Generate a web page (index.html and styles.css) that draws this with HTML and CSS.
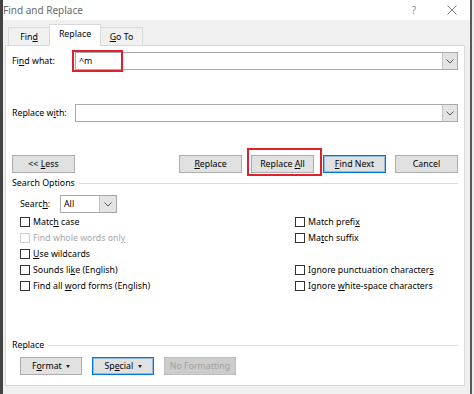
FILE: index.html
```html
<!DOCTYPE html>
<html>
<head>
  <title>Find and Replace</title>
  <link rel="stylesheet" href="styles.css">
</head>
<body>
  <div class="dialog">
    <!-- Title bar -->
    <div class="titlebar">
      <span class="title">Find and Replace</span>
      <span class="help">?</span>
      <svg class="close" width="10" height="10" viewBox="0 0 10 10">
        <path d="M0.5 0.5L9.5 9.5M9.5 0.5L0.5 9.5" stroke="#7a7a7a" stroke-width="1" fill="none"/>
      </svg>
    </div>

    <div class="dialog-body">
      <!-- Tabs -->
      <div class="tabs">
        <div class="tab tab-find">Fin<u>d</u></div>
        <div class="tab tab-replace active">Replace</div>
        <div class="tab tab-goto"><span><u>G</u>o To</span></div>
      </div>

      <!-- Replace page -->
      <div class="panel">
        <div class="field-row">
          <span class="field-label">Fi<u>n</u>d what:</span>
          <div class="combo marked">
            <span class="combo-text">^m</span>
            <span class="combo-arrow">
              <svg width="8" height="5" viewBox="0 0 8 5"><path d="M0.5 0.5L4 4L7.5 0.5" stroke="#555" fill="none"/></svg>
            </span>
          </div>
        </div>

        <div class="field-row replace-row">
          <span class="field-label">Replace w<u>i</u>th:</span>
          <div class="combo">
            <span class="combo-text"></span>
            <span class="combo-arrow">
              <svg width="8" height="5" viewBox="0 0 8 5"><path d="M0.5 0.5L4 4L7.5 0.5" stroke="#555" fill="none"/></svg>
            </span>
          </div>
        </div>

        <div class="button-row">
          <button class="btn">&lt;&lt; <u>L</u>ess</button>
          <button class="btn push-right"><u>R</u>eplace</button>
          <button class="btn marked">Replace <u>A</u>ll</button>
          <button class="btn default"><u>F</u>ind Next</button>
          <button class="btn">Cancel</button>
        </div>

        <!-- Search options group -->
        <div class="group-head"><span>Search Options</span></div>
        <div class="options">
          <div class="search-row">
            <span class="search-label">Searc<u>h</u>:</span>
            <div class="select">
              <span class="select-text">All</span>
              <span class="select-arrow">
                <svg width="8" height="5" viewBox="0 0 8 5"><path d="M0.5 0.5L4 4L7.5 0.5" stroke="#555" fill="none"/></svg>
              </span>
            </div>
          </div>
          <div></div>

          <div class="check"><span class="box"></span><span>Matc<u>h</u> case</span></div>
          <div class="check"><span class="box"></span><span>Match prefi<u>x</u></span></div>

          <div class="check disabled"><span class="box"></span><span>Find whole words onl<u>y</u></span></div>
          <div class="check"><span class="box"></span><span>Ma<u>t</u>ch suffix</span></div>

          <div class="check"><span class="box"></span><span><u>U</u>se wildcards</span></div>
          <div></div>

          <div class="check"><span class="box"></span><span>Sounds li<u>k</u>e (English)</span></div>
          <div class="check"><span class="box"></span><span>Ignore punctuation character<u>s</u></span></div>

          <div class="check"><span class="box"></span><span>Find all <u>w</u>ord forms (English)</span></div>
          <div class="check"><span class="box"></span><span>Ignore <u>w</u>hite-space characters</span></div>
        </div>

        <!-- Replace group -->
        <div class="group-head replace-head"><span>Replace</span></div>
        <div class="button-row format-row">
          <button class="btn menu">F<u>o</u>rmat <span class="caret"></span></button>
          <button class="btn menu default">Sp<u>e</u>cial <span class="caret"></span></button>
          <button class="btn wide" disabled>No Formatting</button>
        </div>
      </div>
    </div>
  </div>
</body>
</html>
```

FILE: styles.css
```css
/* Page */
body {
  margin: 0;
  background: #ececec;
  font-family: "Noto Sans", sans-serif;
  font-size: 8.8px;
  color: #000;
}

u {
  text-underline-offset: 1px;
}

/* Window frame */
.dialog {
  width: 467px;
  height: 394px;
  border-left: 3px solid #434343;
  border-right: 2px solid #5a5a5a;
  background: #f0f0f0;
  display: flex;
  flex-direction: column;
}

/* Title bar */
.titlebar {
  height: 20px;
  background: #fff;
  display: flex;
  align-items: center;
  flex-shrink: 0;
}

.title {
  flex: 1;
  font-size: 10px;
  color: #6a6a6a;
}

.help {
  font-size: 10px;
  color: #8a8a8a;
  margin-right: 31px;
}

.close {
  margin-right: 13px;
}

/* Body below title */
.dialog-body {
  flex: 1;
  display: flex;
  flex-direction: column;
  padding: 0 5px 8px 2px;
}

/* Tabs */
.tabs {
  height: 25px;
  display: flex;
  align-items: flex-end;
  padding-left: 3px;
  flex-shrink: 0;
}

.tab {
  height: 18px;
  border: 1px solid #d9d9d9;
  border-bottom: none;
  box-sizing: border-box;
  display: flex;
  align-items: center;
  justify-content: center;
  background: #f0f0f0;
}

.tab + .tab {
  margin-left: -1px;
}

.tab-find {
  width: 42px;
}

.tab-replace {
  width: 52px;
}

.tab-goto {
  width: 43px;
}

.tab.active {
  height: 22px;
  background: #fff;
  margin-bottom: -1px;
  position: relative;
  z-index: 1;
  padding-bottom: 3px;
}

/* Page panel */
.panel {
  flex: 1;
  background: #fff;
  border: 1px solid #d9d9d9;
  padding: 6px 6px 0 6px;
  display: flex;
  flex-direction: column;
}

.field-row {
  display: flex;
  align-items: center;
}

.field-label {
  width: 63px;
  flex-shrink: 0;
}

.replace-row {
  margin-top: 34px;
}

/* Combo box */
.combo {
  flex: 1;
  height: 18px;
  box-sizing: border-box;
  border: 1px solid #a9a9a9;
  display: flex;
  align-items: stretch;
  position: relative;
}

.combo-text {
  flex: 1;
  padding-left: 3px;
  display: flex;
  align-items: center;
}

.combo-arrow,
.select-arrow {
  width: 14px;
  background: #e3e3e3;
  border-left: 1px solid #c4c4c4;
  display: flex;
  align-items: center;
  justify-content: center;
}

/* Buttons */
.button-row {
  display: flex;
  margin-top: 33px;
  gap: 9px;
}

.btn {
  font: inherit;
  color: #000;
  width: 63px;
  height: 18px;
  line-height: 16px;
  padding: 0;
  box-sizing: border-box;
  background: #e1e1e1;
  border: 1px solid #adadad;
  text-align: center;
  white-space: nowrap;
  position: relative;
}

.btn.default {
  border-color: #0078d7;
  box-shadow: inset 0 0 0 1px rgba(0, 120, 215, 0.35);
}

.push-right {
  margin-left: auto;
}

.btn:disabled {
  background: #cccccc;
  border-color: #bfbfbf;
  color: #a0a0a0;
}

/* Red annotation marks */
.combo.marked::after,
.btn.marked::after {
  content: "";
  position: absolute;
  border: 2px solid #e0202c;
  box-sizing: border-box;
}

.combo.marked::after {
  left: -4px;
  top: -3px;
  width: 51px;
  height: 22px;
}

.btn.marked::after {
  left: -5px;
  top: -8px;
  width: 75px;
  height: 28px;
}

/* Group headers */
.group-head {
  height: 12px;
  margin-top: 4px;
  display: flex;
  align-items: center;
}

.group-head span {
  padding-right: 4px;
}

.group-head::after {
  content: "";
  flex: 1;
  border-top: 1px solid #dcdcdc;
}

/* Option grid */
.options {
  margin: 5px 0 0 8px;
  display: grid;
  grid-template-columns: 275px 1fr;
  grid-template-rows: 20px repeat(5, 16px);
}

.search-row {
  display: flex;
  align-items: center;
}

.search-label {
  width: 40px;
}

.select {
  width: 57px;
  height: 18px;
  box-sizing: border-box;
  border: 1px solid #a9a9a9;
  display: flex;
}

.select-text {
  flex: 1;
  padding-left: 3px;
  display: flex;
  align-items: center;
}

.select-arrow {
  width: 16px;
}

.check {
  display: flex;
  align-items: center;
}

.box {
  width: 10px;
  height: 10px;
  box-sizing: border-box;
  border: 1px solid #333;
  background: #fff;
  margin-right: 3px;
  flex-shrink: 0;
}

.check.disabled {
  color: #a6a6a6;
}

.check.disabled .box {
  border-color: #cfcfcf;
}

/* Replace group */
.replace-head {
  margin-top: 45px;
}

.format-row {
  margin: 6px 0 0 8px;
  gap: 10px;
}

.format-row .btn {
  width: 62px;
}

.format-row .btn.wide {
  width: 72px;
}

.caret {
  display: inline-block;
  vertical-align: middle;
  margin-left: 2px;
  border-left: 2.5px solid transparent;
  border-right: 2.5px solid transparent;
  border-top: 3px solid #222;
}
```
